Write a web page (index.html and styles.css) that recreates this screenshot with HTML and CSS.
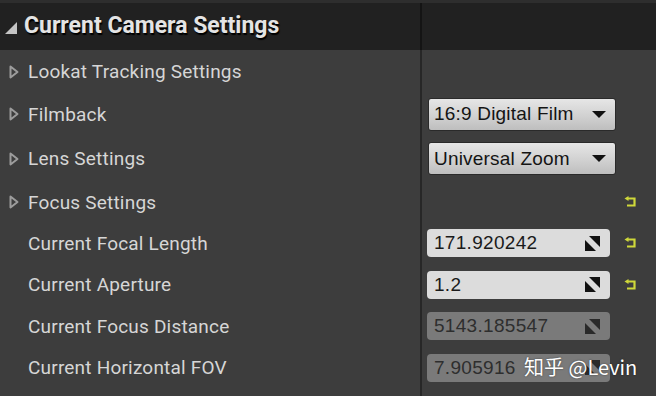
FILE: index.html
```html
<!DOCTYPE html>
<html lang="en">
<head>
    <meta charset="UTF-8">
    <title>Current Camera Settings</title>
    <link rel="stylesheet" href="styles.css">
</head>
<body>
    <div class="panel">
        <!-- Category header -->
        <div class="row header">
            <div class="name-cell">
                <svg class="collapse-icon" width="14" height="14" viewBox="0 0 14 14"><polygon points="13,1 13,13 1,13" fill="#c4c4c4"/></svg>
                <span class="header-title">Current Camera Settings</span>
            </div>
            <div class="value-cell"></div>
        </div>

        <div class="row h43">
            <div class="name-cell">
                <svg class="expander" width="10" height="14" viewBox="0 0 10 14"><polygon points="1.5,1.5 8.5,7 1.5,12.5" fill="none" stroke="#9c9c9c" stroke-width="2" stroke-linejoin="round"/></svg>
                <span class="label">Lookat Tracking Settings</span>
            </div>
            <div class="value-cell"></div>
        </div>

        <div class="row h42">
            <div class="name-cell">
                <svg class="expander" width="10" height="14" viewBox="0 0 10 14"><polygon points="1.5,1.5 8.5,7 1.5,12.5" fill="none" stroke="#9c9c9c" stroke-width="2" stroke-linejoin="round"/></svg>
                <span class="label">Filmback</span>
            </div>
            <div class="value-cell">
                <div class="combo"><span>16:9 Digital Film</span><span class="combo-arrow"></span></div>
            </div>
        </div>

        <div class="row h47">
            <div class="name-cell">
                <svg class="expander" width="10" height="14" viewBox="0 0 10 14"><polygon points="1.5,1.5 8.5,7 1.5,12.5" fill="none" stroke="#9c9c9c" stroke-width="2" stroke-linejoin="round"/></svg>
                <span class="label">Lens Settings</span>
            </div>
            <div class="value-cell">
                <div class="combo"><span>Universal Zoom</span><span class="combo-arrow"></span></div>
            </div>
        </div>

        <div class="row h40">
            <div class="name-cell">
                <svg class="expander" width="10" height="14" viewBox="0 0 10 14"><polygon points="1.5,1.5 8.5,7 1.5,12.5" fill="none" stroke="#9c9c9c" stroke-width="2" stroke-linejoin="round"/></svg>
                <span class="label">Focus Settings</span>
            </div>
            <div class="value-cell">
                <svg class="reset" width="13" height="12" viewBox="0 0 13 12"><path d="M4 2.5 H10.5 V9.5 H3" fill="none" stroke="#cfd83a" stroke-width="2.2"/><polygon points="0.5,2.5 4.5,0 4.5,5" fill="#cfd83a"/></svg>
            </div>
        </div>

        <div class="row h42">
            <div class="name-cell indent">
                <span class="label">Current Focal Length</span>
            </div>
            <div class="value-cell">
                <div class="num-box"><span>171.920242</span>
                    <svg class="spin" width="15" height="15" viewBox="0 0 15 15"><polygon points="4,0 15,0 15,11" fill="#111"/><polygon points="0,4 0,15 11,15" fill="#111"/></svg>
                </div>
                <svg class="reset" width="13" height="12" viewBox="0 0 13 12"><path d="M4 2.5 H10.5 V9.5 H3" fill="none" stroke="#cfd83a" stroke-width="2.2"/><polygon points="0.5,2.5 4.5,0 4.5,5" fill="#cfd83a"/></svg>
            </div>
        </div>

        <div class="row h41">
            <div class="name-cell indent">
                <span class="label">Current Aperture</span>
            </div>
            <div class="value-cell">
                <div class="num-box"><span>1.2</span>
                    <svg class="spin" width="15" height="15" viewBox="0 0 15 15"><polygon points="4,0 15,0 15,11" fill="#111"/><polygon points="0,4 0,15 11,15" fill="#111"/></svg>
                </div>
                <svg class="reset" width="13" height="12" viewBox="0 0 13 12"><path d="M4 2.5 H10.5 V9.5 H3" fill="none" stroke="#cfd83a" stroke-width="2.2"/><polygon points="0.5,2.5 4.5,0 4.5,5" fill="#cfd83a"/></svg>
            </div>
        </div>

        <div class="row h42">
            <div class="name-cell indent">
                <span class="label">Current Focus Distance</span>
            </div>
            <div class="value-cell">
                <div class="num-box disabled"><span>5143.185547</span>
                    <svg class="spin" width="15" height="15" viewBox="0 0 15 15"><polygon points="4,0 15,0 15,11" fill="#2a2a2a"/><polygon points="0,4 0,15 11,15" fill="#2a2a2a"/></svg>
                </div>
            </div>
        </div>

        <div class="row h41">
            <div class="name-cell indent">
                <span class="label">Current Horizontal FOV</span>
            </div>
            <div class="value-cell">
                <div class="num-box disabled"><span>7.905916</span>
                    <svg class="spin" width="15" height="15" viewBox="0 0 15 15"><polygon points="4,0 15,0 15,11" fill="#2a2a2a"/><polygon points="0,4 0,15 11,15" fill="#2a2a2a"/></svg>
                </div>
            </div>
        </div>

        <div class="row filler">
            <div class="name-cell"></div>
            <div class="value-cell"></div>
        </div>

        <!-- watermark over the last field -->
        <div class="watermark">知乎 @Levin</div>
    </div>
</body>
</html>
```

FILE: styles.css
```css
body {
    margin: 0;
    background-color: #3d3d3d;
    font-family: Roboto, "Liberation Sans", sans-serif;
    overflow: hidden;
}
.panel {
    width: 656px;
    height: 396px;
    display: flex;
    flex-direction: column;
    position: relative;
    background-color: #3d3d3d;
}
.row {
    display: flex;
    flex-shrink: 0;
}
.name-cell {
    width: 422px;
    display: flex;
    align-items: center;
    border-right: 2px solid #272727;
    box-sizing: border-box;
    padding-left: 9px;
}
.name-cell.indent {
    padding-left: 28px;
}
.value-cell {
    flex: 1;
    display: flex;
    align-items: center;
    padding-left: 5px;
    padding-right: 19px;
}

/* header */
.header {
    height: 50px;
    background-color: #212121;
    border-top: 3px solid #2e2e2e;
    box-sizing: border-box;
}
.header .name-cell {
    padding-left: 4px;
    padding-bottom: 3px;
    border-right-color: #141414;
}
.collapse-icon {
    margin-top: 6px;
}
.header-title {
    margin-left: 6px;
    font-size: 23px;
    font-weight: bold;
    color: #e4e4e4;
    text-shadow: 1px 2px 1px #000000;
}

/* rows */
.h40 { height: 40px; }
.h41 { height: 41px; }
.h42 { height: 42px; }
.h43 { height: 43px; }
.h47 { height: 47px; }
.filler { flex: 1; }

.expander {
    margin-right: 9px;
}
.label {
    font-size: 19px;
    letter-spacing: 0.2px;
    color: #d6d6d6;
}

/* combo box */
.combo {
    width: 188px;
    height: 33px;
    margin-left: 1px;
    box-sizing: border-box;
    border: 1px solid #2a2a2a;
    border-radius: 3px;
    background: linear-gradient(#e6e6e6, #cfcfcf 60%, #bebebe);
    display: flex;
    align-items: center;
    justify-content: space-between;
    padding: 0 9px 0 5px;
    font-family: "Liberation Sans", Arial, sans-serif;
    font-size: 19px;
    letter-spacing: 0.2px;
    color: #141414;
}
.combo-arrow {
    width: 0;
    height: 0;
    border-left: 7px solid transparent;
    border-right: 7px solid transparent;
    border-top: 7px solid #111111;
}

/* numeric entry */
.num-box {
    width: 183px;
    height: 28px;
    box-sizing: border-box;
    border-radius: 4px;
    background-color: #dcdcdc;
    display: flex;
    align-items: center;
    justify-content: space-between;
    padding: 0 10px 0 7px;
    font-family: "Liberation Sans", Arial, sans-serif;
    font-size: 19px;
    letter-spacing: 0.3px;
    color: #1a1a1a;
}
.num-box.disabled {
    background-color: #7a7a7a;
    color: #2e2e2e;
}
.reset {
    margin-left: auto;
}

.watermark {
    position: absolute;
    left: 524px;
    top: 352px;
    font-family: "Noto Sans CJK SC", "Liberation Sans", sans-serif;
    font-size: 20px;
    color: #ffffff;
    text-shadow: 0 0 2px rgba(0, 0, 0, 0.5);
}
```
